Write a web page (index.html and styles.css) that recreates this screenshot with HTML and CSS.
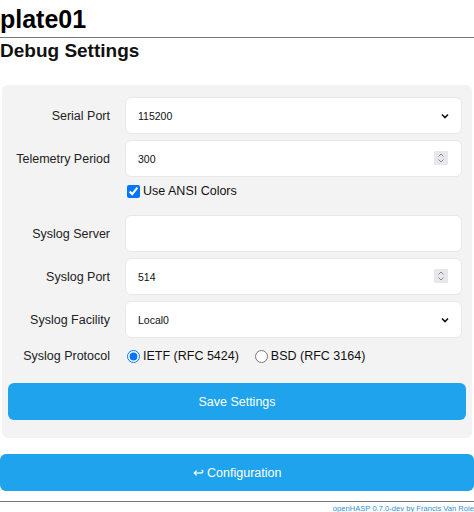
FILE: index.html
```html
<!DOCTYPE html>
<html>
<head>
<meta charset="utf-8">
<title>plate01</title>
<link rel="stylesheet" href="styles.css">
</head>
<body>
<div class="page">
  <h1 class="title">plate01</h1>
  <hr class="rule">
  <h2 class="subtitle">Debug Settings</h2>
  <form class="panel">
    <div class="row">
      <label class="lbl" for="baud">Serial Port</label>
      <div class="wrap">
        <select class="field" id="baud"><option>115200</option></select>
        <svg class="chev" width="8" height="6" viewBox="0 0 8 6"><path d="M1 1.5 L4 4.5 L7 1.5" fill="none" stroke="#111" stroke-width="1.6"/></svg>
      </div>
    </div>
    <div class="row">
      <label class="lbl" for="tele">Telemetry Period</label>
      <div class="wrap">
        <input class="field" id="tele" type="number" value="300">
        <svg class="spin" width="14" height="14" viewBox="0 0 14 14"><rect width="14" height="14" rx="1" fill="#e8e8ec"/><path d="M4.5 5.5 L7 3 L9.5 5.5 M4.5 8.5 L7 11 L9.5 8.5" fill="none" stroke="#8a8a8e" stroke-width="1"/></svg>
      </div>
    </div>
    <div class="row row-check">
      <span></span>
      <label class="opt"><input type="checkbox" checked> Use ANSI Colors</label>
    </div>
    <div class="row">
      <label class="lbl" for="srv">Syslog Server</label>
      <div class="wrap">
        <input class="field" id="srv" type="text" value="">
      </div>
    </div>
    <div class="row">
      <label class="lbl" for="port">Syslog Port</label>
      <div class="wrap">
        <input class="field" id="port" type="number" value="514">
        <svg class="spin" width="14" height="14" viewBox="0 0 14 14"><rect width="14" height="14" rx="1" fill="#e8e8ec"/><path d="M4.5 5.5 L7 3 L9.5 5.5 M4.5 8.5 L7 11 L9.5 8.5" fill="none" stroke="#8a8a8e" stroke-width="1"/></svg>
      </div>
    </div>
    <div class="row">
      <label class="lbl" for="fac">Syslog Facility</label>
      <div class="wrap">
        <select class="field" id="fac"><option>Local0</option></select>
        <svg class="chev" width="8" height="6" viewBox="0 0 8 6"><path d="M1 1.5 L4 4.5 L7 1.5" fill="none" stroke="#111" stroke-width="1.6"/></svg>
      </div>
    </div>
    <div class="row row-radio">
      <span class="lbl">Syslog Protocol</span>
      <div class="radios">
        <label class="opt"><input type="radio" name="proto" checked> IETF (RFC 5424)</label>
        <label class="opt"><input type="radio" name="proto"> BSD (RFC 3164)</label>
      </div>
    </div>
    <button type="button" class="btn btn-save">Save Settings</button>
  </form>
  <button type="button" class="btn btn-config">&#8617; Configuration</button>
  <hr class="rule rule-foot">
  <div class="foot"><a href="#" class="foot-link">openHASP 0.7.0-dev by Francis Van Roie</a></div>
</div>
</body>
</html>
```
FILE: styles.css
```css
html, body {
  margin: 0;
  padding: 0;
  overflow: hidden;
  background: #fff;
}
body {
  font-family: "Liberation Sans", Arial, sans-serif;
  color: #111;
  width: 474px;
}
.page {
  display: flex;
  flex-direction: column;
}
.title {
  font-size: 25px;
  font-weight: bold;
  line-height: 30px;
  margin: 0;
  padding-top: 4px;
  color: #000;
}
.rule {
  border: 0;
  border-top: 1px solid #777;
  margin: 3px 0 0 0;
  height: 0;
}
.subtitle {
  font-size: 19px;
  font-weight: bold;
  line-height: 22px;
  margin: 2px 0 0 0;
  color: #111;
}
.panel {
  margin: 23px 2px 0 2px;
  background: #f3f3f3;
  border-radius: 6px;
  padding: 12px 6px 18px 6px;
  display: flex;
  flex-direction: column;
  gap: 6px;
}
.row {
  display: grid;
  grid-template-columns: 102px 1fr;
  column-gap: 15px;
  align-items: center;
  margin-right: 4px;
}
.lbl {
  text-align: right;
  font-size: 12.5px;
  color: #222;
}
.wrap {
  position: relative;
  display: flex;
}
.field {
  height: 37px;
  box-sizing: border-box;
  border: 1px solid #e8e8e8;
  border-radius: 6px;
  background: #fff;
  font-family: "Liberation Sans", Arial, sans-serif;
  font-size: 10.5px;
  color: #111;
  padding: 0 10px 0 12px;
  width: 100%;
  outline: none;
  -webkit-appearance: none;
  appearance: none;
  -moz-appearance: textfield;
}
.field::-webkit-inner-spin-button,
.field::-webkit-outer-spin-button {
  -webkit-appearance: none;
  margin: 0;
}
.chev {
  position: absolute;
  right: 13px;
  top: 16px;
  pointer-events: none;
}
.spin {
  position: absolute;
  right: 14px;
  top: 11px;
  pointer-events: none;
}
.row-check {
  height: 16px;
  margin-bottom: 10px;
}
.row-radio {
  height: 24px;
  margin-bottom: 9px;
}
.opt {
  font-size: 12.5px;
  color: #111;
  display: inline-flex;
  align-items: center;
  white-space: nowrap;
}
.opt input {
  margin: 0 3px 0 2px;
  width: 13px;
  height: 13px;
}
.radios {
  display: flex;
  gap: 14px;
}
.btn {
  height: 37px;
  border: 0;
  border-radius: 6px;
  background: #1fa3ec;
  color: #fff;
  font-family: "Liberation Sans", Arial, sans-serif;
  font-size: 12.5px;
  width: 100%;
}
.btn-config {
  margin-top: 16px;
}
.rule-foot {
  margin-top: 10px;
}
.foot {
  display: flex;
  justify-content: flex-end;
}
.foot-link {
  font-size: 7.6px;
  color: #2f8fd6;
  text-decoration: underline;
  white-space: nowrap;
  margin-top: 2px;
}
```
